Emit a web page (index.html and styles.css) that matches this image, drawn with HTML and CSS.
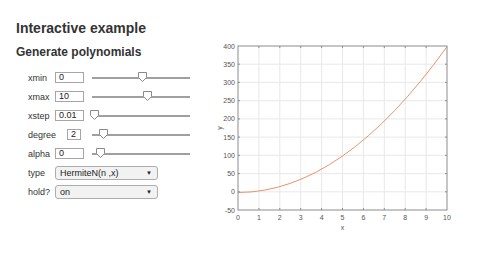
FILE: index.html
```html
<!DOCTYPE html>
<html lang="en">
<head>
  <meta charset="UTF-8">
  <title>Interactive example</title>
  <link rel="stylesheet" href="styles.css">
</head>
<body>
  <h1 class="title">Interactive example</h1>

  <div class="main">
    <!-- controls -->
    <div class="panel">
      <h2 class="subtitle">Generate polynomials</h2>

      <div class="row">
        <span class="label">xmin</span>
        <span class="field">0</span>
        <div class="slider"><span class="thumb" style="left: 51%"><svg viewBox="0 0 9 10"><path d="M0.5 0.5H8.5V5.5L4.5 9.5L0.5 5.5Z"/></svg></span></div>
      </div>
      <div class="row">
        <span class="label">xmax</span>
        <span class="field">10</span>
        <div class="slider"><span class="thumb" style="left: 56%"><svg viewBox="0 0 9 10"><path d="M0.5 0.5H8.5V5.5L4.5 9.5L0.5 5.5Z"/></svg></span></div>
      </div>
      <div class="row">
        <span class="label">xstep</span>
        <span class="field">0.01</span>
        <div class="slider"><span class="thumb" style="left: 2%"><svg viewBox="0 0 9 10"><path d="M0.5 0.5H8.5V5.5L4.5 9.5L0.5 5.5Z"/></svg></span></div>
      </div>
      <div class="row">
        <span class="label">degree</span>
        <span class="field field-small">2</span>
        <div class="slider"><span class="thumb" style="left: 11%"><svg viewBox="0 0 9 10"><path d="M0.5 0.5H8.5V5.5L4.5 9.5L0.5 5.5Z"/></svg></span></div>
      </div>
      <div class="row">
        <span class="label">alpha</span>
        <span class="field">0</span>
        <div class="slider"><span class="thumb" style="left: 8%"><svg viewBox="0 0 9 10"><path d="M0.5 0.5H8.5V5.5L4.5 9.5L0.5 5.5Z"/></svg></span></div>
      </div>
      <div class="row">
        <span class="label">type</span>
        <div class="dropdown"><span>HermiteN(n ,x)</span><span class="caret">&#9660;</span></div>
      </div>
      <div class="row">
        <span class="label">hold?</span>
        <div class="dropdown"><span>on</span><span class="caret">&#9660;</span></div>
      </div>
    </div>

    <!-- plot -->
    <svg class="plot" viewBox="0 0 260 198" width="260" height="198">
      <g class="grid">
        <path d="M58.9 8V172M79.8 8V172M100.7 8V172M121.6 8V172M142.5 8V172M163.4 8V172M184.3 8V172M205.2 8V172M226.1 8V172"/>
        <path d="M38 26.2H247M38 44.4H247M38 62.7H247M38 80.9H247M38 99.1H247M38 117.3H247M38 135.6H247M38 153.8H247"/>
      </g>
      <path class="curve" d="M38 154.5Q142.5 154.5 247 8.7"/>
      <g class="axes">
        <rect x="38" y="8" width="209" height="164"/>
        <path d="M58.9 172v-2M79.8 172v-2M100.7 172v-2M121.6 172v-2M142.5 172v-2M163.4 172v-2M184.3 172v-2M205.2 172v-2M226.1 172v-2"/>
        <path d="M58.9 8v2M79.8 8v2M100.7 8v2M121.6 8v2M142.5 8v2M163.4 8v2M184.3 8v2M205.2 8v2M226.1 8v2"/>
        <path d="M38 26.2h2M38 44.4h2M38 62.7h2M38 80.9h2M38 99.1h2M38 117.3h2M38 135.6h2M38 153.8h2"/>
        <path d="M247 26.2h-2M247 44.4h-2M247 62.7h-2M247 80.9h-2M247 99.1h-2M247 117.3h-2M247 135.6h-2M247 153.8h-2"/>
      </g>
      <g class="ticks ticks-y">
        <text x="35" y="10.5">400</text>
        <text x="35" y="28.7">350</text>
        <text x="35" y="46.9">300</text>
        <text x="35" y="65.2">250</text>
        <text x="35" y="83.4">200</text>
        <text x="35" y="101.6">150</text>
        <text x="35" y="119.8">100</text>
        <text x="35" y="138.1">50</text>
        <text x="35" y="156.3">0</text>
        <text x="35" y="174.5">-50</text>
      </g>
      <g class="ticks ticks-x">
        <text x="38" y="182">0</text>
        <text x="58.9" y="182">1</text>
        <text x="79.8" y="182">2</text>
        <text x="100.7" y="182">3</text>
        <text x="121.6" y="182">4</text>
        <text x="142.5" y="182">5</text>
        <text x="163.4" y="182">6</text>
        <text x="184.3" y="182">7</text>
        <text x="205.2" y="182">8</text>
        <text x="226.1" y="182">9</text>
        <text x="247" y="182">10</text>
      </g>
      <text class="axis-label" x="142.5" y="192">x</text>
      <text class="axis-label" transform="translate(22 90) rotate(-90)">y</text>
    </svg>
  </div>
</body>
</html>
```

FILE: styles.css
```css
body {
  margin: 0;
  font-family: "Liberation Sans", Arial, sans-serif;
  color: #333;
  background-color: #fff;
}
.title {
  margin: 0;
  padding: 20px 0 0 16px;
  font-size: 14px;
  font-weight: bold;
  line-height: 17px;
  color: #333;
}
.main {
  display: flex;
}
.panel {
  width: 200px;
}
.subtitle {
  margin: 8px 0 9px 16px;
  font-size: 12px;
  font-weight: bold;
  line-height: 14px;
  color: #333;
}
.row {
  display: grid;
  grid-template-columns: 27px 37px 98px;
  align-items: center;
  height: 19px;
  padding-left: 28px;
}
.label {
  font-size: 9px;
  color: #333;
  white-space: nowrap;
}
.field {
  box-sizing: border-box;
  width: 29px;
  height: 11px;
  padding-left: 3px;
  border: 1px solid #a6a6a6;
  font-size: 9px;
  line-height: 9px;
  color: #222;
}
.field-small {
  width: 14px;
  margin-left: 12px;
}
.slider {
  position: relative;
  height: 2px;
  background-color: #a0a0a0;
}
.thumb {
  position: absolute;
  top: -5px;
  width: 9px;
  height: 10px;
  margin-left: -4px;
}
.thumb svg {
  display: block;
  width: 9px;
  height: 10px;
  fill: #fff;
  stroke: #8a8a8a;
  stroke-width: 1;
}
.dropdown {
  grid-column: 2 / span 2;
  box-sizing: border-box;
  display: flex;
  justify-content: space-between;
  align-items: center;
  width: 103px;
  height: 14px;
  padding: 0 5px 0 4px;
  border: 1px solid #adadad;
  border-radius: 3px;
  background-color: #f2f2f2;
  font-size: 9px;
  color: #222;
}
.caret {
  font-size: 6px;
  color: #222;
}
.plot {
  display: block;
  margin-top: 1px;
}
.grid path {
  fill: none;
  stroke: #e8e8e8;
  stroke-width: 1;
}
.curve {
  fill: none;
  stroke: #e8936c;
  stroke-width: 1;
}
.axes rect,
.axes path {
  fill: none;
  stroke: #8c8c8c;
  stroke-width: 1;
}
.ticks text {
  font-family: "Liberation Sans", Arial, sans-serif;
  font-size: 7px;
  fill: #555;
}
.ticks-y text {
  text-anchor: end;
}
.ticks-x text {
  text-anchor: middle;
}
.axis-label {
  font-family: "Liberation Sans", Arial, sans-serif;
  font-size: 7px;
  fill: #555;
  text-anchor: middle;
}
```
